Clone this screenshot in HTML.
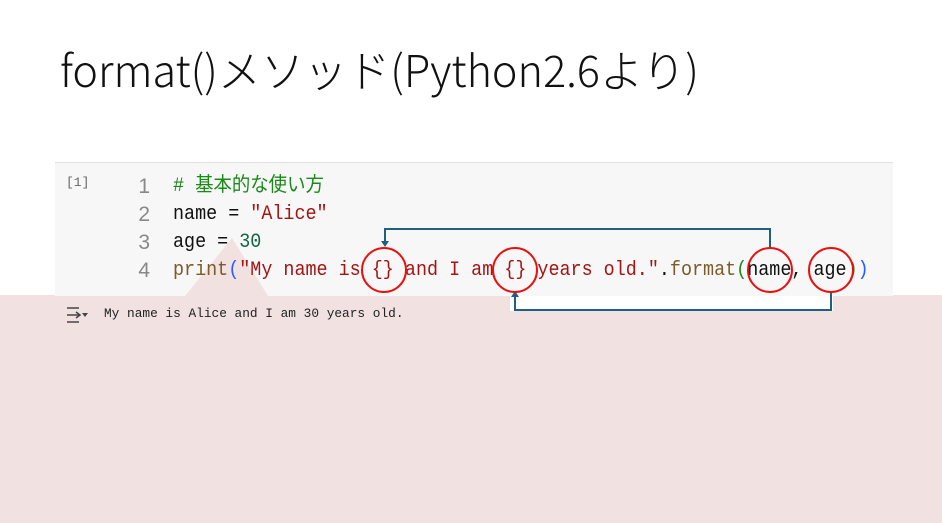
<!DOCTYPE html>
<html><head><meta charset="utf-8"><style>
body{margin:0;width:942px;height:523px;position:relative;overflow:hidden;background:#fff;font-family:"Liberation Sans","Noto Sans CJK JP",sans-serif}
.pink{position:absolute;background:#f1e1e1}
#title{position:absolute;left:60px;top:40px;font-size:44px;font-weight:300;color:#111;white-space:nowrap;transform-origin:0 0;transform:scaleX(0.98);font-family:"Noto Sans CJK JP",sans-serif;line-height:56px}
#cell{position:absolute;left:55px;top:162px;width:838px;height:133px;background:#f7f7f7;border-top:1px solid #e0e0e0}
.code{position:absolute;left:173px;font-family:"Liberation Mono","Noto Sans CJK JP",monospace;font-size:20px;white-space:pre;line-height:28px;transform-origin:0 0;transform:scaleX(0.92)}
.ln{position:absolute;left:128px;width:22px;text-align:right;font-family:"Liberation Sans",sans-serif;font-size:21px;color:#888;line-height:28px}
.g{color:#1a8a1a}.r{color:#a31515}.n{color:#116644}.b{color:#7a5c2a}.bl{color:#2a5cff}.k{color:#111}
</style></head><body>
<div class="pink" style="left:0;top:295px;width:942px;height:228px"></div>
<div id="title">format()メソッド(Python2.6より)</div>
<div id="cell"></div>
<svg style="position:absolute;left:0;top:0" width="942" height="523">
<polygon points="185,296 232,238 268,296" fill="#f1e1e1"/>
</svg>
<div class="pink" style="left:893px;top:304px;width:49px;height:10px"></div>
<div style="position:absolute;left:66px;top:175px;font-family:'Liberation Mono',monospace;font-size:13px;color:#666">[1]</div>
<div class="ln" style="top:173px">1</div>
<div class="ln" style="top:201px">2</div>
<div class="ln" style="top:229px">3</div>
<div class="ln" style="top:257px">4</div>
<div class="code g" style="top:173px"># 基本的な使い方</div>
<div class="code k" style="top:201px">name = <span class="r">"Alice"</span></div>
<div class="code k" style="top:229px">age = <span class="n">30</span></div>
<div class="code k" style="top:257px"><span class="b">print</span><span class="bl">(</span><span class="r">"My name is {} and I am {} years old."</span>.<span class="b">format</span><span class="g">(</span>name, age<span class="g">)</span><span class="bl">)</span></div>
<div style="position:absolute;left:510px;top:296px;width:323px;height:15px;background:#fff"></div>
<svg style="position:absolute;left:0;top:0" width="942" height="523">
<g fill="none" stroke="#1f6080" stroke-width="2">
<polyline points="770,249 770,229 385,229 385,242"/>
<polyline points="831,291 831,310 515,310 515,297"/>
</g>
<polygon points="381,241 389,241 385,247" fill="#1f6080"/>
<polygon points="511,297 519,297 515,291" fill="#1f6080"/>
<g fill="none" stroke="#e81010" stroke-width="2">
<circle cx="384" cy="270" r="22"/>
<circle cx="515" cy="270" r="22"/>
<circle cx="770" cy="270" r="22"/>
<circle cx="831" cy="270" r="22"/>
</g>
<g stroke="#444" stroke-width="1.5" fill="none">
<line x1="67" y1="308" x2="79" y2="308"/>
<line x1="67" y1="322" x2="79" y2="322"/>
<line x1="67" y1="315" x2="80" y2="315"/>
<polyline points="76,312 80,315 76,318"/>
</g>
<polygon points="82,313 88,313 85,317" fill="#444"/>
</svg>
<div style="position:absolute;left:104px;top:306px;font-family:'Liberation Mono',monospace;font-size:12.8px;color:#222;white-space:pre">My name is Alice and I am 30 years old.</div>
</body></html>
